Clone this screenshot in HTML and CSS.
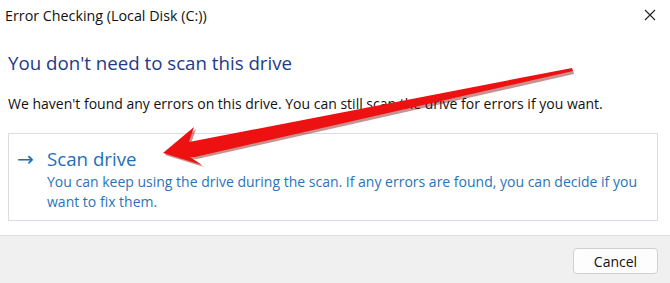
FILE: index.html
```html
<!DOCTYPE html>
<html>
<head>
<meta charset="utf-8">
<link rel="stylesheet" href="styles.css">
</head>
<body>
<div class="window">
  <div class="titlebar">
    <span class="title">Error Checking (Local Disk (C:))</span>
    <svg class="close" width="12" height="12" viewBox="0 0 12 12"><path d="M1 1L11 11M11 1L1 11" stroke="#222" stroke-width="1.1" fill="none"/></svg>
  </div>
  <div class="content">
    <h1 class="heading">You don't need to scan this drive</h1>
    <p class="info">We haven't found any errors on this drive. You can still scan the drive for errors if you want.</p>
    <div class="option">
      <span class="arrow">&#8594;</span>
      <div class="option-text">
        <div class="option-title">Scan drive</div>
        <div class="option-desc">You can keep using the drive during the scan. If any errors are found, you can decide if you want to fix them.</div>
      </div>
    </div>
  </div>
  <div class="footer">
    <button class="btn">Cancel</button>
  </div>
  <svg class="annot" width="670" height="283" viewBox="0 0 670 283">
    <polygon points="165,155 196,129 191,144 573,70 574,74 197,159 192,159 204,167" fill="#8a0a0a" opacity="0.45"/>
    <polygon points="163,153 194,127 189,142 572,68 573,71 195,157 190,157 202,165" fill="#ee1111"/>
  </svg>
</div>
</body>
</html>
```
FILE: styles.css
```css
html, body {
  margin: 0;
  padding: 0;
  background: #ffffff;
}
.window {
  position: relative;
  width: 670px;
  height: 283px;
  overflow: hidden;
  font-family: "Open Sans", "Noto Sans", sans-serif;
  color: #1a1a1a;
  display: flex;
  flex-direction: column;
}
.titlebar {
  height: 30px;
  display: flex;
  align-items: center;
  justify-content: space-between;
  padding: 0 14px 0 5px;
}
.title {
  font-size: 14.3px;
  color: #111;
}
.close {
  display: block;
}
.content {
  flex: 1;
  padding: 0 12px 0 8px;
}
.heading {
  margin: 20px 0 0 0;
  font-size: 18.7px;
  font-weight: 400;
  line-height: 26px;
  color: #1f3a8a;
}
.info {
  margin: 18px 0 0 0;
  font-size: 14px;
  line-height: 20px;
  color: #111;
}
.option {
  margin-top: 19px;
  border: 1px solid #d8dde3;
  height: 88px;
  box-sizing: border-box;
  display: flex;
  padding: 12px 0 0 8px;
}
.arrow {
  font-size: 20px;
  line-height: 26px;
  color: #1e6fb8;
  width: 30px;
  font-family: "DejaVu Sans", sans-serif;
}
.option-title {
  font-size: 18.7px;
  line-height: 26px;
  color: #1e6fb8;
}
.option-desc {
  font-size: 14px;
  line-height: 20px;
  color: #2a73ba;
  width: 600px;
}
.footer {
  height: 48px;
  box-sizing: border-box;
  border-top: 1px solid #dcdcdc;
  background: #f0f0f0;
  display: flex;
  justify-content: flex-end;
  align-items: flex-start;
  padding: 12px 12px 0 0;
}
.btn {
  width: 85px;
  height: 26px;
  background: #fdfdfd;
  border: 1px solid #d0d0d0;
  border-radius: 4px;
  font-family: "Open Sans", "Noto Sans", sans-serif;
  font-size: 14px;
  color: #111;
  padding: 0;
}
.annot {
  position: absolute;
  left: 0;
  top: 0;
  pointer-events: none;
}
```
